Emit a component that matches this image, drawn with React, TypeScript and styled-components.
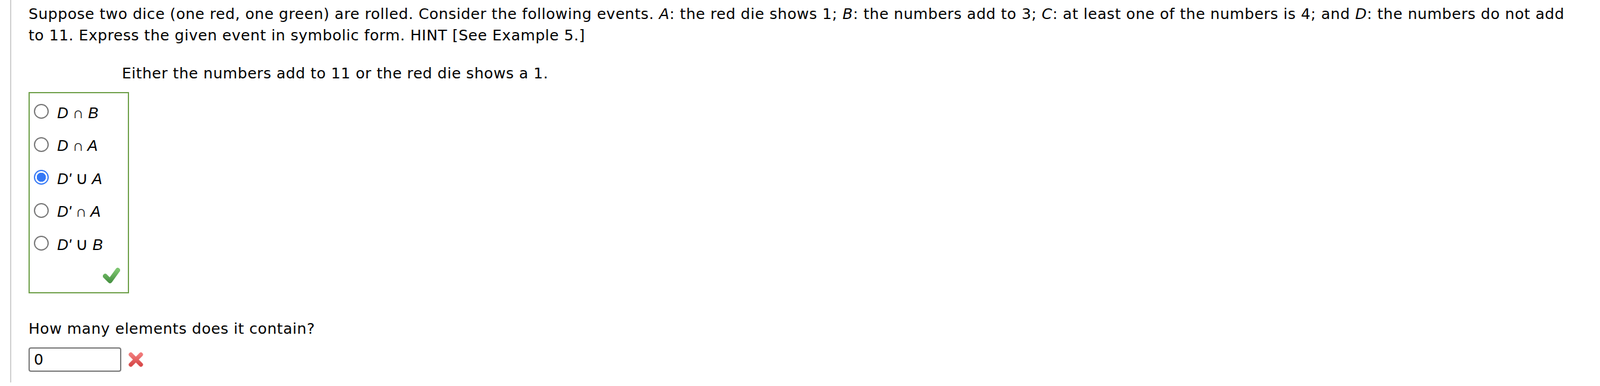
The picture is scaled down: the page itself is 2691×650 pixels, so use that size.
import React from "react";
import styled, { createGlobalStyle } from "styled-components";

const Global = createGlobalStyle`
  html, body { margin: 0; padding: 0; background: #fff; }
  body { font-family: "DejaVu Sans", Verdana, sans-serif; color: #000; }
`;

const Page = styled.div`
  margin-left: 17px;
  border-left: 2px solid #cfcfcf;
  padding: 6px 52px 0 29px;
  min-height: 644px;
  box-sizing: border-box;
`;

const Para = styled.p`
  margin: 0;
  font-size: 25px;
  letter-spacing: 0.55px;
  line-height: 36px;
`;

const Prompt = styled(Para)`
  margin: 28px 0 0 157px;
`;

const ChoiceBox = styled.div`
  margin-top: 13px;
  width: 169px;
  height: 339px;
  box-sizing: border-box;
  border: 2px solid #6fa04a;
  padding: 3px 13px 0 7px;
  display: flex;
  flex-direction: column;
`;

const Row = styled.label`
  height: 55.5px;
  display: flex;
  align-items: center;
  gap: 14px;
`;

const Radio = styled.span<{ $on?: boolean }>`
  width: 25px;
  height: 25px;
  box-sizing: border-box;
  border-radius: 50%;
  border: 2px solid ${(p) => (p.$on ? "#3478f6" : "#767676")};
  background: ${(p) => (p.$on ? "radial-gradient(circle, #3478f6 0 7.5px, #fff 8px)" : "#fff")};
  flex: none;
`;

const Choice = styled.span`
  font-family: "Liberation Sans", Arial, sans-serif;
  font-style: italic;
  font-size: 26px;
  line-height: 30px;
  white-space: pre;
  padding-top: 4px;
`;

const Op = styled.span<{ $cup?: boolean }>`
  font-style: normal;
  font-family: ${(p) => (p.$cup ? '"DejaVu Sans", sans-serif' : '"Liberation Sans", Arial, sans-serif')};
  font-size: ${(p) => (p.$cup ? "29px" : "26px")};
`;

const Mark = styled.div`
  flex: 1;
  display: flex;
  justify-content: flex-end;
  align-items: center;
  padding-bottom: 4px;
`;

const Question = styled(Para)`
  margin: 42px 0 0;
`;

const AnswerRow = styled.div`
  margin-top: 13px;
  display: flex;
  align-items: center;
  gap: 11px;
`;

const Field = styled.input`
  width: 156px;
  height: 41px;
  box-sizing: border-box;
  border: 2px solid #767676;
  border-radius: 4px;
  padding: 0 7px;
  font-family: "DejaVu Sans", Verdana, sans-serif;
  font-size: 25px;
  color: #000;
  outline: none;
`;

const Check = () => (
  <svg width="29" height="30" viewBox="0 0 29 30">
    <defs>
      <linearGradient id="cg" x1="0" y1="0" x2="0" y2="1">
        <stop offset="0" stopColor="#7cc46f" />
        <stop offset="1" stopColor="#4c9646" />
      </linearGradient>
    </defs>
    <path
      d="M4 17 L12 25 L25 7"
      fill="none"
      stroke="url(#cg)"
      strokeWidth="8"
      strokeLinecap="round"
      strokeLinejoin="round"
    />
  </svg>
);

const Cross = () => (
  <svg width="27" height="27" viewBox="0 0 27 27">
    <defs>
      <linearGradient id="xg" x1="0" y1="0" x2="0" y2="1">
        <stop offset="0" stopColor="#f07a7a" />
        <stop offset="1" stopColor="#d84b4b" />
      </linearGradient>
    </defs>
    <path
      d="M5 5 L22 22 M22 5 L5 22"
      fill="none"
      stroke="url(#xg)"
      strokeWidth="7"
      strokeLinecap="round"
    />
  </svg>
);

type Opt = { left: string; cup: boolean; right: string };
const options: Opt[] = [
  { left: "D", cup: false, right: "B" },
  { left: "D", cup: false, right: "A" },
  { left: "D'", cup: true, right: "A" },
  { left: "D'", cup: false, right: "A" },
  { left: "D'", cup: true, right: "B" },
];

export default function App() {
  return (
    <>
      <Global />
      <Page>
        <Para>
          Suppose two dice (one red, one green) are rolled. Consider the following events. <i>A</i>: the red die
          shows 1; <i>B</i>: the numbers add to 3; <i>C</i>: at least one of the numbers is 4; and <i>D</i>: the
          numbers do not add to 11. Express the given event in symbolic form. HINT [See Example 5.]
        </Para>
        <Prompt>Either the numbers add to 11 or the red die shows a 1.</Prompt>
        <ChoiceBox>
          {options.map((o, i) => (
            <Row key={i}>
              <Radio $on={i === 2} />
              <Choice>
                {o.left + " "}
                <Op $cup={o.cup}>{o.cup ? "∪" : "∩"}</Op>
                {" " + o.right}
              </Choice>
            </Row>
          ))}
          <Mark>
            <Check />
          </Mark>
        </ChoiceBox>
        <Question>How many elements does it contain?</Question>
        <AnswerRow>
          <Field defaultValue="0" />
          <Cross />
        </AnswerRow>
      </Page>
    </>
  );
}
